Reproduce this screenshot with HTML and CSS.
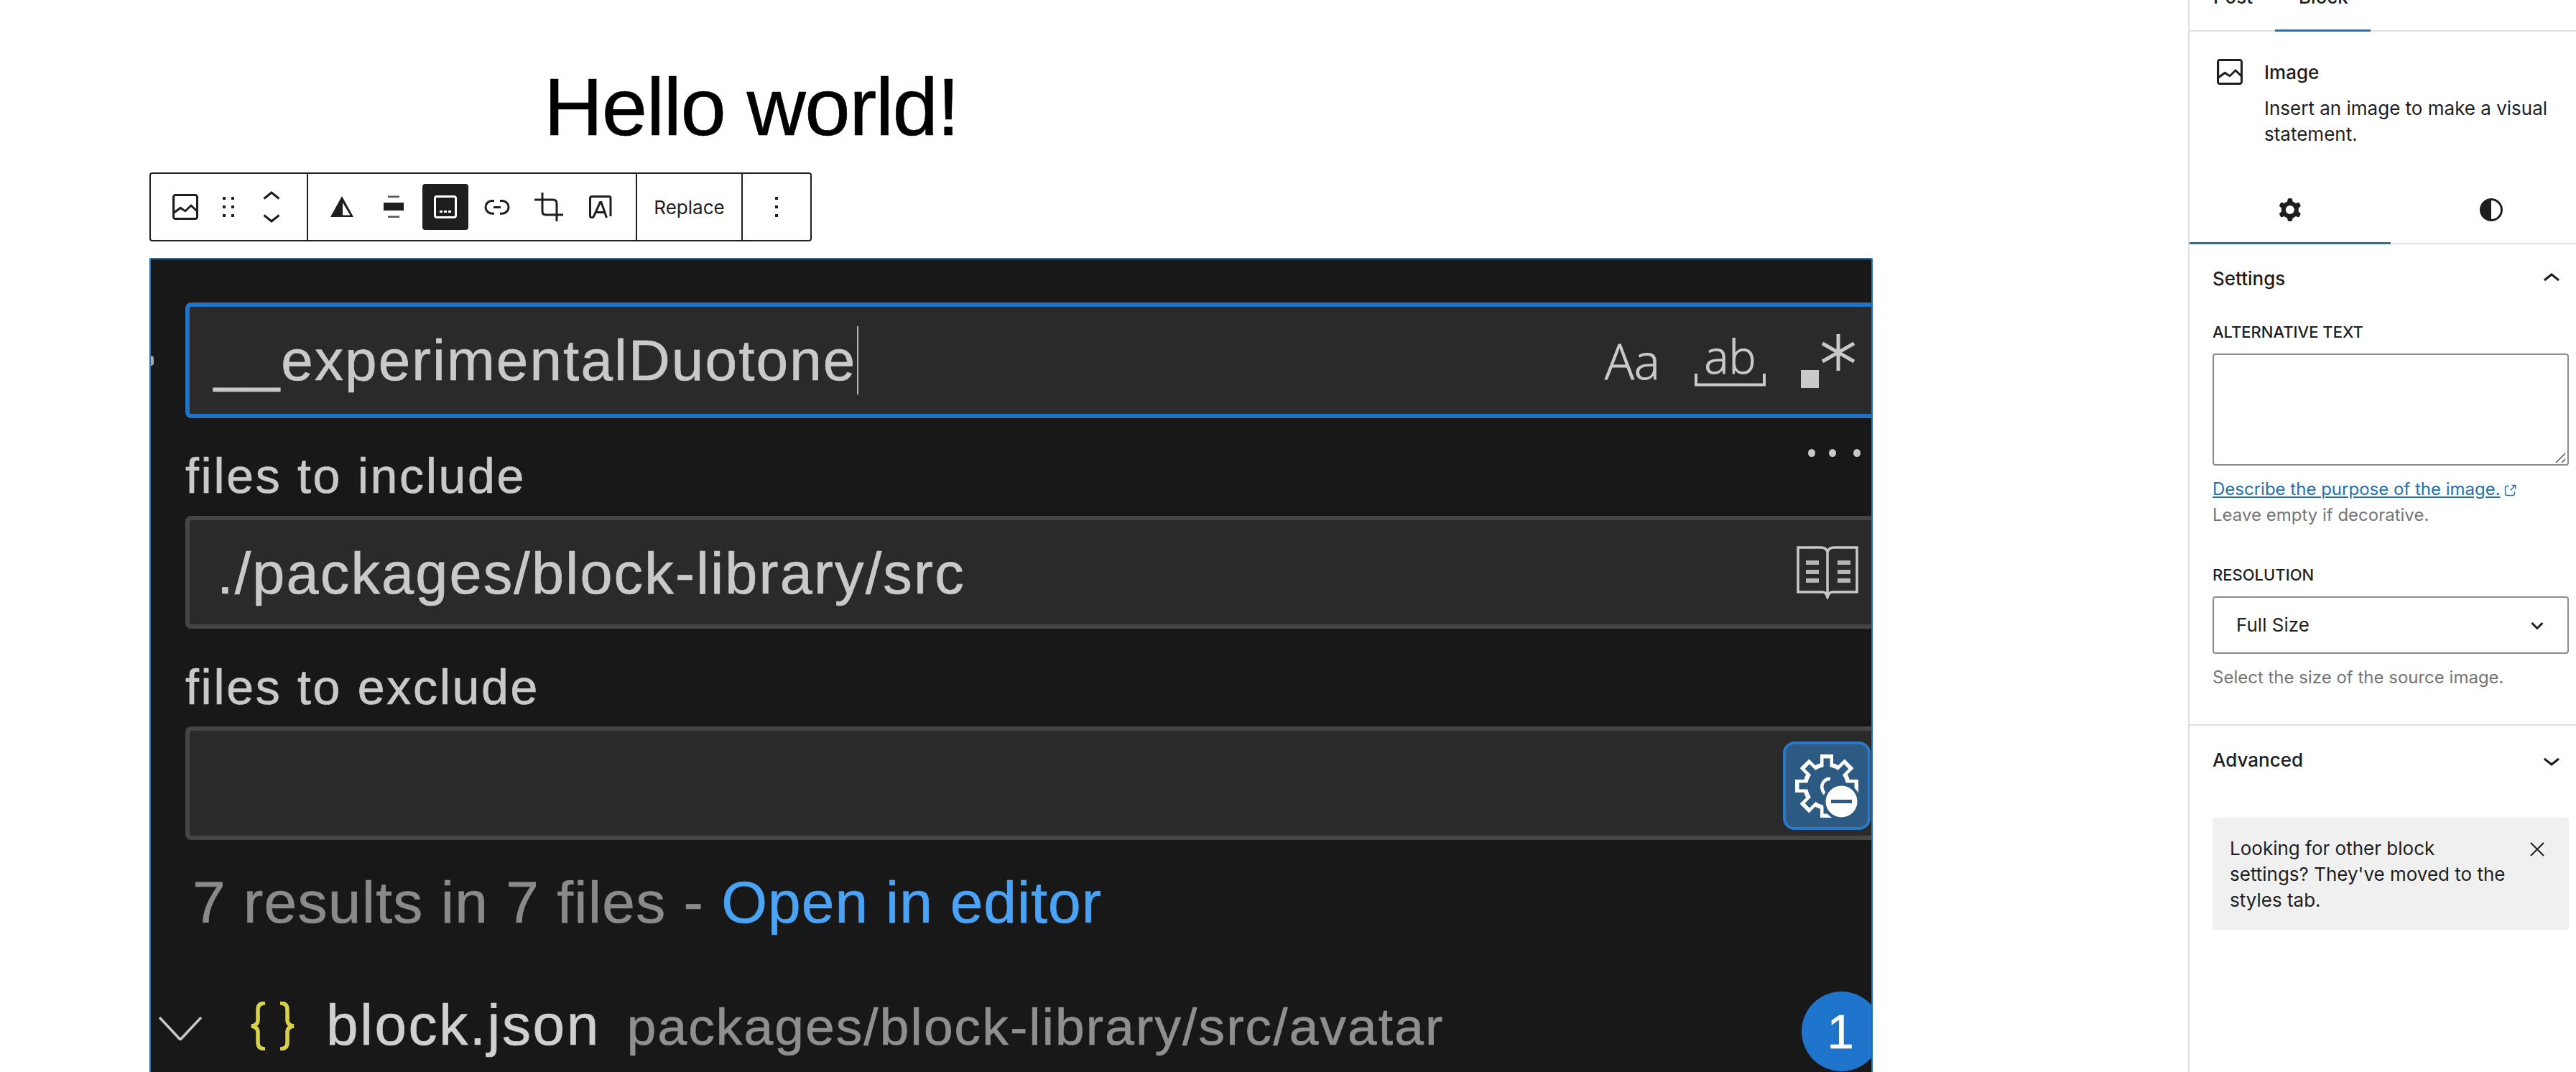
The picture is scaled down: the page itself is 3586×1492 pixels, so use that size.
FILE: index.html
```html
<!DOCTYPE html>
<html lang="en">
<head>
<meta charset="utf-8">
<title>Hello world!</title>
<link rel="stylesheet" href="styles.css">
</head>
<body>
<div class="app">
  <main class="canvas">
    <h1 class="title">Hello world!</h1>
    <div class="toolbar">
      <div class="tb-group g1">
        <svg class="ic" viewBox="0 0 24 24"><path d="M19 3H5c-1.1 0-2 .9-2 2v14c0 1.1.9 2 2 2h14c1.1 0 2-.9 2-2V5c0-1.1-.9-2-2-2zM5 4.5h14c.3 0 .5.2.5.5v8.4l-3-2.9c-.3-.3-.8-.3-1 0L11.9 14 9 12c-.3-.2-.6-.2-.8 0l-3.6 2.6V5c-.1-.3.1-.5.4-.5zm14 15H5c-.3 0-.5-.2-.5-.5v-2.4l4.1-3 3 1.9c.3.2.7.2.9-.1L16 12l3.5 3.4V19c0 .3-.2.5-.5.5z"/></svg>
        <svg class="ic drag" viewBox="0 0 24 24"><path d="M8 7h2V5H8v2zm0 6h2v-2H8v2zm0 6h2v-2H8v2zm6-14v2h2V5h-2zm0 8h2v-2h-2v2zm0 6h2v-2h-2v2z"/></svg>
        <svg class="mover" viewBox="0 0 28 48"><path d="M3.5 12.5 14 4l10.5 8.5M3.5 35.5 14 44l10.5-8.5"/></svg>
      </div>
      <div class="tb-group g2">
        <span class="tb-btn"><svg class="ic" viewBox="0 0 48 48"><path fill-rule="evenodd" d="M24 9 40 38H8ZM25 18 35.500 35.500H25Z"/></svg></span>
        <span class="tb-btn"><svg class="ic" viewBox="0 0 48 48"><rect x="10" y="18" width="28" height="11"/><rect class="soft" x="16" y="8.500" width="16" height="2.500"/><rect class="soft" x="16" y="36.500" width="16" height="2.500"/></svg></span>
        <span class="tb-btn active"><svg class="ic" viewBox="0 0 24 24"><path fill-rule="evenodd" d="M6 5.500h12a.5.5 0 01.5.5v12a.5.5 0 01-.5.5H6a.5.5 0 01-.5-.5V6a.5.5 0 01.5-.5zM4 6a2 2 0 012-2h12a2 2 0 012 2v12a2 2 0 01-2 2H6a2 2 0 01-2-2V6zm4 10h2v-1.500H8V16zm5 0h-2v-1.500h2V16zm1 0h2v-1.500h-2V16z"/></svg></span>
        <span class="tb-btn"><svg class="ic" viewBox="0 0 24 24"><path d="M10 17.389H8.444A5.194 5.194 0 1 1 8.444 7H10v1.500H8.444a3.694 3.694 0 0 0 0 7.389H10v1.500ZM14 7h1.556a5.194 5.194 0 0 1 0 10.390H14v-1.500h1.556a3.694 3.694 0 0 0 0-7.390H14V7Zm-4.500 6h5v-1.500h-5V13Z"/></svg></span>
        <span class="tb-btn"><svg class="crop" viewBox="0 0 40 40"><path d="M11 0V26Q11 31 16 31H40M0 10H26Q31 10 31 15V40"/></svg></span>
        <span class="tb-btn"><svg class="crop overlay" viewBox="0 0 32 32"><path d="M30 29V4Q30 1.500 28 1.500H4Q1.500 1.500 1.500 4V28Q1.500 31 4 31Q6 31 7 28L15.500 9.500H17L24.500 31M10 23.500H22"/></svg></span>
      </div>
      <div class="tb-group g3">Replace</div>
      <div class="tb-group g4">
        <svg class="ic" viewBox="0 0 24 24"><path d="M13 19h-2v-2h2v2zm0-6h-2v-2h2v2zm0-6h-2V5h2v2z"/></svg>
      </div>
    </div>

    <figure class="image-block">
      <div class="shot">
        <span class="notch"></span>
        <div class="vs-input focus">
          <span class="vs-text">__experimentalDuotone</span><span class="caret"></span>
          <div class="vs-actions">
            <span class="act-aa">Aa</span>
            <span class="act-ab">
              <span class="act-ab-text">ab</span>
              <svg class="bracket" viewBox="0 0 99 18"><path d="M2 0V15.500H97V0"/></svg>
            </span>
            <svg class="regex" viewBox="0 0 75 75"><rect x="0" y="50" width="25" height="25"/><path d="M52 0V51M30 13 74 38M74 13 30 38"/></svg>
          </div>
        </div>
        <div class="vs-label first">files to include</div>
        <div class="vs-input second">
          <span class="vs-text">./packages/block-library/src</span>
          <svg class="book" viewBox="0 0 86 75"><path d="M2 3H34Q41 3 43 9Q45 3 52 3H84V65H50Q45 65 43 72Q41 65 36 65H2ZM43 9V70"/><path class="book-lines" d="M13 24H31M13 37H31M13 49H31M57 24H75M57 37H75M57 49H75"/></svg>
        </div>
        <div class="vs-label">files to exclude</div>
        <div class="vs-input third">
          <span class="gear-btn">
            <svg class="gear" viewBox="-50 -50 100 100">
              <defs>
                <g id="cog-outer"><circle r="33"/><rect x="-9" y="-44" width="18" height="88"/><rect x="-9" y="-44" width="18" height="88" transform="rotate(45)"/><rect x="-9" y="-44" width="18" height="88" transform="rotate(90)"/><rect x="-9" y="-44" width="18" height="88" transform="rotate(135)"/></g>
                <g id="cog-inner"><circle r="27"/><rect x="-4.500" y="-38.500" width="9" height="77"/><rect x="-4.500" y="-38.500" width="9" height="77" transform="rotate(45)"/><rect x="-4.500" y="-38.500" width="9" height="77" transform="rotate(90)"/><rect x="-4.500" y="-38.500" width="9" height="77" transform="rotate(135)"/></g>
              </defs>
              <use href="#cog-outer" class="cog-out"/>
              <use href="#cog-inner" class="cog-in"/>
              <path class="cog-c" d="M5-10A11 11 0 0 0-6 5Q-5 10 0 12"/>
              <circle class="cog-in" cx="20.500" cy="21.500" r="26"/>
              <circle class="cog-out" cx="20.500" cy="21.500" r="22"/>
              <rect class="cog-in" x="6" y="19" width="29" height="5"/>
            </svg>
          </span>
        </div>
        <div class="results">7 results in 7 files - <span class="open">Open in editor</span></div>
        <div class="file-row">
          <svg class="twist" viewBox="0 0 60 33"><path d="M1 1 30 32 59 1"/></svg>
          <svg class="braces" viewBox="0 0 65 68"><path d="M22 2Q12 2 12 11V26Q12 33 3 34Q12 35 12 43V57Q12 66 22 66M43 2Q53 2 53 11V26Q53 33 62 34Q53 35 53 43V57Q53 66 43 66"/></svg>
          <div class="file-names"><span class="fname">block.json</span><span class="fpath">packages/block-library/src/avatar</span></div>
        </div>
        <span class="badge">1</span>
      </div>
    </figure>
  </main>

  <aside class="sidebar">
    <div class="tabs">
      <span class="tab">Post</span>
      <span class="tab on">Block</span>
      <svg class="tabs-close" viewBox="0 0 24 24"><path d="M3 3 21 21M21 3 3 21"/></svg>
    </div>
    <div class="card">
      <svg class="ic" viewBox="0 0 24 24"><path d="M19 3H5c-1.1 0-2 .9-2 2v14c0 1.1.9 2 2 2h14c1.1 0 2-.9 2-2V5c0-1.1-.9-2-2-2zM5 4.500h14c.3 0 .5.2.5.5v8.400l-3-2.900c-.3-.3-.8-.3-1 0L11.900 14 9 12c-.3-.2-.6-.2-.8 0l-3.600 2.600V5c-.1-.3.1-.5.4-.5zm14 15H5c-.3 0-.5-.2-.5-.5v-2.400l4.100-3 3 1.900c.3.2.7.2.9-.1L16 12l3.500 3.400V19c0 .3-.2.5-.5.5z"/></svg>
      <div class="card-text">
        <div class="card-title">Image</div>
        <div class="card-desc">Insert an image to make a visual statement.</div>
      </div>
    </div>
    <div class="subtabs">
      <span class="subtab on"><svg class="ic" viewBox="0 0 24 24"><path fill-rule="evenodd" d="M10.289 4.836A1 1 0 0 1 11.275 4h1.306a1 1 0 0 1 .987.836l.244 1.466c.787.26 1.503.679 2.108 1.218l1.393-.522a1 1 0 0 1 1.216.437l.653 1.130a1 1 0 0 1-.23 1.273l-1.148.944a6.025 6.025 0 0 1 0 2.435l1.149.946a1 1 0 0 1 .23 1.272l-.653 1.130a1 1 0 0 1-1.216.437l-1.394-.522c-.605.54-1.32.958-2.108 1.218l-.244 1.466a1 1 0 0 1-.987.836h-1.306a1 1 0 0 1-.986-.836l-.244-1.466a5.995 5.995 0 0 1-2.108-1.218l-1.394.522a1 1 0 0 1-1.217-.436l-.653-1.131a1 1 0 0 1 .23-1.272l1.149-.946a6.026 6.026 0 0 1 0-2.435l-1.148-.944a1 1 0 0 1-.23-1.272l.653-1.131a1 1 0 0 1 1.217-.437l1.393.522a5.994 5.994 0 0 1 2.108-1.218l.244-1.466ZM14.929 12a3 3 0 1 1-6 0 3 3 0 0 1 6 0Z"/></svg></span>
      <span class="subtab"><svg class="ic" viewBox="0 0 24 24"><path fill-rule="evenodd" d="M12 4a8 8 0 1 0 0 16 8 8 0 0 0 0-16zm0 1.500a6.500 6.500 0 0 1 0 13z"/></svg></span>
    </div>
    <section class="panel">
      <div class="panel-head"><span>Settings</span><svg class="ic" viewBox="0 0 24 24"><path d="M6.500 12.400L12 8l5.500 4.400-.9 1.200L12 10l-4.500 3.600-1-1.200z"/></svg></div>
      <div class="panel-body">
        <label class="field-label alt">Alternative text</label>
        <div class="alt-wrap">
          <textarea class="alt-input"></textarea>
          <svg class="resizer" viewBox="0 0 15 15"><path d="M1 14 14 1M9 14 14 9"/></svg>
        </div>
        <div class="help-row"><a class="help-link">Describe the purpose of the image.</a><svg class="ext" viewBox="0 0 24 24"><path d="M18.200 17c0 .7-.6 1.200-1.200 1.200H7c-.7 0-1.200-.6-1.200-1.200V7c0-.7.6-1.200 1.200-1.200h3.200V4.200H7C5.500 4.200 4.200 5.500 4.200 7v10c0 1.500 1.200 2.800 2.800 2.800h10c1.500 0 2.800-1.200 2.800-2.800v-3.600h-1.500V17zM14.900 3v1.500h3.700l-6.400 6.400 1.100 1.100 6.400-6.400v3.700h1.500V3h-6.300z"/></svg></div>
        <div class="help">Leave empty if decorative.</div>
        <label class="field-label res">Resolution</label>
        <div class="select"><span>Full Size</span><svg class="sel-chev" viewBox="0 0 18 12"><path d="M1.500 2 9 9.500 16.500 2"/></svg></div>
        <div class="help sel-help">Select the size of the source image.</div>
      </div>
    </section>
    <section class="panel-closed">
      <div class="panel-head"><span>Advanced</span><svg class="ic" viewBox="0 0 24 24"><path d="M17.500 11.600L12 16l-5.500-4.400.9-1.200L12 14l4.500-3.600 1 1.200z"/></svg></div>
    </section>
    <div class="notice">
      <p class="notice-text">Looking for other block settings? They've moved to the styles tab.</p>
      <svg class="notice-x" viewBox="0 0 20 20"><path d="M1 1 19 19M19 1 1 19"/></svg>
    </div>
  </aside>
</div>
</body>
</html>
```
FILE: styles.css
```css
* { box-sizing: border-box; }
html, body { margin: 0; padding: 0; height: 100%; overflow: hidden; background: #fff; }
body { font-family: "Inter", "Liberation Sans", sans-serif; color: #1e1e1e; }

.app { display: flex; width: 3586px; height: 1492px; overflow: hidden; }
.ic { width: 48px; height: 48px; fill: currentColor; flex: none; display: block; }

/* canvas */
.canvas { flex: 0 0 3046px; padding: 92px 0 0 208px; }
.title {
  margin: 0 0 34px 549px;
  font: 400 114px/114px "Liberation Sans", Arial, sans-serif;
  letter-spacing: -1.500px;
  color: #000;
  white-space: nowrap;
  -webkit-text-stroke: .6px #000;
}

/* toolbar */
.toolbar { display: flex; width: 922px; height: 96px; border: 2px solid #1e1e1e; border-radius: 4px; background: #fff; }
.tb-group { display: flex; align-items: center; border-right: 2px solid #1e1e1e; flex: none; }
.g1 { width: 219px; padding-left: 24px; }
.drag { margin-left: 12px; }
.mover { width: 28px; height: 48px; margin-left: 22px; fill: none; stroke: #1e1e1e; stroke-width: 3px; }
.g2 { width: 458px; padding-left: 11px; }
.tb-btn { width: 72px; height: 64px; display: flex; align-items: center; justify-content: center; flex: none; }
.tb-btn.active { width: 64px; margin: 0 4px; background: #1e1e1e; color: #fff; border-radius: 4px; }
.soft { fill: #555; }
.crop { width: 40px; height: 40px; fill: none; stroke: #1e1e1e; stroke-width: 3px; display: block; }
.overlay { width: 32px; height: 32px; }
.g3 { width: 147px; justify-content: center; font-size: 26px; }
.g4 { flex: 1; border-right: 0; justify-content: center; }

/* image block */
.image-block {
  position: relative;
  margin: 23px 0 0;
  width: 2399px;
  height: 1133px;
  border: 2px solid #2271b1;
  border-bottom: 0;
  border-radius: 2px 2px 0 0;
  background: #181818;
  overflow: hidden;
}
.shot {
  height: 100%;
  padding: 60px 0 0 48px;
  font-family: "Liberation Sans", Arial, sans-serif;
  color: #c9c9c9;
  -webkit-text-stroke: .7px currentColor;
  filter: blur(.55px);
}
.notch { position: absolute; left: 0; top: 134px; width: 4px; height: 14px; border-radius: 0 5px 5px 0; background: #a8a8a8; }
.vs-input {
  display: flex;
  align-items: center;
  height: 157px;
  padding-left: 38px;
  border: 6px solid #454545;
  border-right: 0;
  border-radius: 8px 0 0 8px;
  background: #2a2a2a;
}
.vs-text { font-size: 81px; line-height: 1; letter-spacing: 2.160px; white-space: nowrap; margin-top: 3px; }
.focus { height: 161px; padding-left: 34px; border-color: #1f74c6; }
.focus .vs-text { font-size: 80px; letter-spacing: 2.140px; margin-top: 0; }
.caret { width: 2px; height: 95px; margin-left: 1px; background: #b5b5b5; }
.vs-actions { margin-left: auto; padding-right: 23px; display: flex; align-items: center; gap: 49px; -webkit-text-stroke: 1px currentColor; }
.act-aa { width: 76px; font: 300 68px/1 "Open Sans", sans-serif; white-space: nowrap; }
.act-ab { width: 99px; display: flex; flex-direction: column; align-items: center; }
.act-ab-text { font: 300 64px/60px "Open Sans", sans-serif; }
.bracket { width: 99px; height: 18px; margin-top: -6px; fill: none; stroke: #c9c9c9; stroke-width: 4px; display: block; }
.regex { width: 75px; height: 75px; fill: #c9c9c9; stroke: #c9c9c9; display: block; margin-top: 1px; }
.regex path { stroke-width: 5px; fill: none; }
.regex rect { stroke: none; }
.vs-label { margin: 44px 0 18px; font-size: 68px; line-height: 74px; letter-spacing: 2.700px; }
.vs-label.first { margin-top: 43px; margin-bottom: 19px; position: relative; }
.vs-label.first::after {
  content: "";
  position: absolute;
  top: 0;
  left: 2259px;
  width: 10px;
  height: 11px;
  border-radius: 50%;
  background: #c9c9c9;
  box-shadow: 29px 0 0 #c9c9c9, 63px 0 0 #c9c9c9;
}
.second { justify-content: space-between; padding-right: 18px; }
.book { width: 86px; height: 75px; fill: none; stroke: #c9c9c9; stroke-width: 3.500px; display: block; }
.book-lines { stroke-width: 6px; stroke: #b5b5b5; }
.third { height: 158px; justify-content: flex-end; }
.gear-btn {
  width: 122px;
  height: 123px;
  margin: 7px 1px 0 0;
  display: flex;
  align-items: center;
  justify-content: center;
  background: #2d5a82;
  border: 4px solid #2a78c6;
  border-radius: 16px;
  flex: none;
}
.gear { width: 100px; height: 100px; display: block; }
.cog-out { fill: #fff; }
.cog-in { fill: #2d5a82; }
.cog-c { fill: none; stroke: #fff; stroke-width: 4.500px; }
.results { margin: 44px 0 0 10px; font-size: 82px; line-height: 85px; letter-spacing: 1.300px; color: #8a8a8a; white-space: nowrap; }
.open { color: #4aa3f5; letter-spacing: 1.050px; }
.file-row { display: flex; align-items: center; margin: 88px 0 0 -37px; height: 84px; }
.twist { width: 60px; height: 33px; margin-top: 7px; fill: none; stroke: #c9c9c9; stroke-width: 3.500px; flex: none; display: block; }
.braces { width: 65px; height: 68px; margin-left: 66px; fill: none; stroke: #d6d04a; stroke-width: 5.500px; flex: none; display: block; }
.file-names { display: flex; align-items: baseline; margin-left: 42px; line-height: 84px; white-space: nowrap; }
.fname { font-size: 80px; letter-spacing: 2.600px; color: #d0d0d0; }
.fpath { margin-left: 37px; font-size: 73px; letter-spacing: 2.140px; color: #8f8f8f; }
.badge {
  position: absolute;
  left: 2298px;
  top: 1019px;
  width: 111px;
  height: 111px;
  border-radius: 50%;
  background: #1f74cc;
  color: #fff;
  font-size: 66px;
  display: flex;
  align-items: center;
  justify-content: center;
  padding-right: 3px;
}

/* sidebar */
.sidebar { flex: 0 0 562px; border-left: 2px solid #e0e0e0; font-size: 26px; line-height: 36px; background: #fff; }
.tabs { position: relative; display: flex; height: 96px; margin-top: -52px; box-shadow: inset 0 -2px 0 #e0e0e0; align-items: stretch; }
.tab { display: flex; align-items: center; width: 119px; padding-left: 33px; font-weight: 500; }
.tab.on { width: 133px; box-shadow: inset 0 -3px 0 #2271b1; }
.tabs-close { position: absolute; left: 494px; top: 32px; width: 20px; height: 20px; fill: none; stroke: #1e1e1e; stroke-width: 3px; }
.card { display: flex; gap: 24px; padding: 32px 32px 39px; }
.card-text { padding-top: 7px; width: 410px; }
.card-title { font-weight: 500; margin-bottom: 14px; }
.subtabs { display: flex; height: 96px; box-shadow: inset 0 -2px 0 #e0e0e0; }
.subtab { flex: 0 0 280px; display: flex; align-items: center; justify-content: center; }
.subtab.on { box-shadow: inset 0 -3px 0 #2271b1; }
.panel { border-bottom: 2px solid #e0e0e0; padding-bottom: 47px; }
.panel-head { display: flex; align-items: center; justify-content: space-between; height: 96px; padding: 0 32px; font-weight: 500; }
.panel-body { padding: 10px 32px 0; }
.field-label { display: block; font-size: 22px; line-height: 32px; font-weight: 500; text-transform: uppercase; }
.alt-wrap { position: relative; width: 496px; height: 156px; margin-top: 14px; }
.alt-input { display: block; width: 100%; height: 100%; border: 2px solid #8c8c8c; border-radius: 4px; background: #fff; resize: none; }
.resizer { position: absolute; right: 4px; bottom: 3px; width: 15px; height: 15px; fill: none; stroke: #555; stroke-width: 1.500px; }
.help-row { display: flex; align-items: center; margin-top: 15px; font-size: 24px; }
.help-link { color: #2271b1; text-decoration: underline; }
.ext { width: 22px; height: 22px; margin: 4px 0 0 2px; fill: #2271b1; }
.help { font-size: 24px; color: #757575; }
.res { margin-top: 49px; }
.select { display: flex; align-items: center; justify-content: space-between; width: 496px; height: 80px; margin-top: 14px; padding: 0 33px 0 31px; border: 2px solid #8c8c8c; border-radius: 4px; color: #1e1e1e; }
.sel-chev { width: 18px; height: 12px; fill: none; stroke: #1e1e1e; stroke-width: 3px; margin-top: 2px; }
.sel-help { margin-top: 15px; }
.notice { display: flex; justify-content: space-between; width: 496px; margin: 32px 0 0 32px; padding: 25px 32px 23px 24px; background: #f0f0f0; border-radius: 4px; }
.notice-text { margin: 0; width: 396px; }
.notice-x { width: 20px; height: 20px; margin-top: 9px; fill: none; stroke: #1e1e1e; stroke-width: 2px; flex: none; margin-right: 2px; }
```
